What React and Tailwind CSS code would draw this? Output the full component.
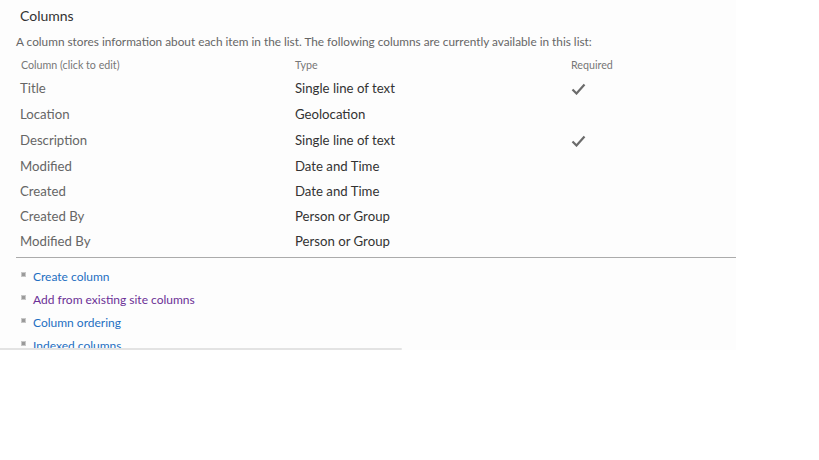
import React from "react";

const rows = [
  { name: "Title", type: "Single line of text", req: true },
  { name: "Location", type: "Geolocation" },
  { name: "Description", type: "Single line of text", req: true },
  { name: "Modified", type: "Date and Time" },
  { name: "Created", type: "Date and Time" },
  { name: "Created By", type: "Person or Group" },
  { name: "Modified By", type: "Person or Group" },
];

const links = [
  { t: "Create column", c: "text-[#1e6fc2]" },
  { t: "Add from existing site columns", c: "text-[#6b3096]" },
  { t: "Column ordering", c: "text-[#1e6fc2]" },
  { t: "Indexed columns", c: "text-[#1e6fc2]" },
];

function Check() {
  return (
    <svg width="15" height="12" viewBox="0 0 15 12">
      <path d="M1.5 6.5 L5.5 10.5 L13.5 1.5" fill="none" stroke="#6b6b6b" strokeWidth="2.2" />
    </svg>
  );
}

export default function App() {
  return (
    <div className="w-[819px] h-[460px] bg-white overflow-hidden" style={{ fontFamily: '"Segoe UI", Lato, sans-serif' }}>
      <div className="w-[736px] h-[350px] bg-[#fdfdfd] overflow-hidden relative">
        <div className="pl-[20px] pt-[6px] text-[14px] leading-[20px] text-[#333]">Columns</div>
        <div className="pl-[16px] pt-[8px] text-[11.8px] leading-[16px] text-[#666]">
          A column stores information about each item in the list. The following columns are currently available in this list:
        </div>
        <div className="ml-[16px] w-[720px]">
          <div className="flex h-[20px] items-center text-[10.7px] text-[#777] mt-[5px]">
            <div className="w-[279px] pl-[5px]">Column (click to edit)</div>
            <div className="w-[276px]">Type</div>
            <div>Required</div>
          </div>
          {rows.map((r) => (
            <div key={r.name} className={`flex items-center text-[13.2px] ${r.req ? "h-[27px]" : "h-[25px]"}`}>
              <div className="w-[279px] pl-[4px] text-[#666]">{r.name}</div>
              <div className="w-[276px] text-[#333]">{r.type}</div>
              <div className="flex items-center">{r.req && <Check />}</div>
            </div>
          ))}
          <div className="h-[1px] bg-[#ababab] mt-[3px]" />
          <div className="pt-[7px]">
            {links.map((l) => (
              <div key={l.t} className="flex items-center h-[23px] text-[12px]">
                <span className="ml-[5px] w-[5px] h-[5px] bg-[#9a9a9a] border border-[#c8c8c8] mr-[7px] -mt-[5px]" />
                <span className={l.c}>{l.t}</span>
              </div>
            ))}
          </div>
        </div>
      </div>
      <div className="-mt-[2px] w-[402px] h-[2px] bg-[#e3e3e3] rounded-r-full relative" />
    </div>
  );
}
